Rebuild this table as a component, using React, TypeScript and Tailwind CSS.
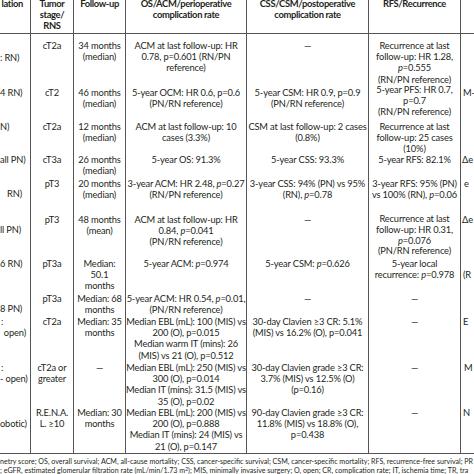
import React from "react";

type Cell = { cls?: string; lines: React.ReactNode[] };
type Row = { h: string; pt: string; cells: Cell[]; last?: boolean };

const P = () => <i>p</i>;

const rows: Row[] = [
  {
    h: "h-[47px]",
    pt: "pt-[3px]",
    cells: [
      { cls: "pt-[15px] text-right pr-[13px]", lines: [": RN)"] },
      { lines: ["cT2a"] },
      { lines: ["34 months", "(median)"] },
      { lines: ["ACM at last follow-up: HR", <>0.78, p=0.601 (RN/PN</>, "reference)"] },
      { lines: ["—"] },
      { lines: ["Recurrence at last", "follow-up: HR 1.28,", <><P />=0.555</>, "(RN/PN reference)"] },
      { lines: [] },
    ],
  },
  {
    h: "h-[37px]",
    pt: "pt-[3px]",
    cells: [
      { cls: "text-right pr-[8px]", lines: ["4 RN)"] },
      { lines: ["cT2"] },
      { lines: ["46 months", "(median)"] },
      { lines: ["5-year OCM: HR 0.6, p=0.6", "(PN/RN reference)"] },
      { lines: ["5-year CSM: HR 0.9, p=0.9", "(PN/RN reference)"] },
      { cls: "pt-0", lines: ["5-year PFS: HR 0.7,", "p=0.7", "(RN/PN reference)"] },
      { cls: "text-left pl-[2px]", lines: ["M-"] },
    ],
  },
  {
    h: "h-[33px]",
    pt: "pt-0",
    cells: [
      { cls: "text-right pr-[24px]", lines: ["N)"] },
      { lines: ["cT2a"] },
      { lines: ["12 months", "(median)"] },
      { lines: ["ACM at last follow-up: 10", "cases (3.3%)"] },
      { lines: ["CSM at last follow-up: 2 cases", "(0.8%)"] },
      { lines: ["Recurrence at last", "follow-up: 25 cases", "(10%)"] },
      { lines: [] },
    ],
  },
  {
    h: "h-[24px]",
    pt: "pt-0",
    cells: [
      { cls: "text-right pr-[8px]", lines: ["all PN)"] },
      { lines: ["cT3a"] },
      { lines: ["26 months", "(median)"] },
      { lines: ["5-year OS: 91.3%"] },
      { lines: ["5-year CSS: 93.3%"] },
      { lines: ["5-year RFS: 82.1%"] },
      { cls: "text-left pl-[1px]", lines: ["Δe"] },
    ],
  },
  {
    h: "h-[36px]",
    pt: "pt-0",
    cells: [
      { cls: "pt-[10px] text-right pr-[8px]", lines: ["RN)"] },
      { lines: ["pT3"] },
      { lines: ["20 months", "(median)"] },
      { lines: [<>3-year ACM: HR 2.48, <P />=0.27</>, "(RN/PN reference)"] },
      { lines: ["3-year CSS: 94% (PN) vs 95%", <>(RN), <P />=0.78</>] },
      { lines: ["3-year RFS: 95% (PN)", <>vs 100% (RN), <P />=0.06</>] },
      { cls: "text-left pl-[3px]", lines: ["e"] },
    ],
  },
  {
    h: "h-[44px]",
    pt: "pt-0",
    cells: [
      { cls: "pt-[10px] text-right pr-[12px]", lines: ["ll PN)"] },
      { lines: ["pT3"] },
      { lines: ["48 months", "(mean)"] },
      { lines: ["ACM at last follow-up: HR", <>0.84, <P />=0.041</>, "(PN/RN reference)"] },
      { lines: ["—"] },
      { cls: "pt-0 leading-[10.8px]", lines: ["Recurrence at last", "follow-up: HR 0.31,", <><P />=0.076</>, "(PN/RN reference)"] },
      { cls: "text-left pl-[1px]", lines: ["Δe"] },
    ],
  },
  {
    h: "h-[35px]",
    pt: "pt-0",
    cells: [
      { cls: "text-right pr-[8px]", lines: ["6 RN)"] },
      { lines: ["pT3a"] },
      { lines: ["Median:", "50.1", "months"] },
      { lines: [<>5-year ACM: <P />=0.974</>] },
      { lines: [<>5-year CSM: <P />=0.626</>] },
      { lines: ["5-year local", <>recurrence: <P />=0.978</>] },
      { cls: "pt-[11px] text-left pl-[2px]", lines: ["(R"] },
    ],
  },
  {
    h: "h-[23px]",
    pt: "pt-0",
    cells: [
      { cls: "pt-[10px] text-right pr-[10px]", lines: ["8 PN)"] },
      { lines: ["pT3a"] },
      { lines: ["Median: 68", "months"] },
      { lines: [<>5-year ACM: HR 0.54, <P />=0.01,</>, "(PN/RN reference)"] },
      { lines: ["—"] },
      { lines: ["—"] },
      { lines: [] },
    ],
  },
  {
    h: "h-[46px]",
    pt: "pt-0",
    cells: [
      { cls: "text-left", lines: [<span className="pl-[1px]">:</span>, <span className="block text-right pr-[4px]">open)</span>] },
      { lines: ["cT2a"] },
      { lines: ["Median: 35", "months"] },
      { lines: ["Median EBL (mL): 100 (MIS) vs", "200 (O), p=0.015", "Median warm IT (mins): 26", "(MIS) vs 21 (O), p=0.512"] },
      { lines: ["30-day Clavien ≥3 CR: 5.1%", "(MIS) vs 16.2% (O), p=0.041"] },
      { lines: ["—"] },
      { cls: "text-left pl-[2px]", lines: ["E"] },
    ],
  },
  {
    h: "h-[45px]",
    pt: "pt-0",
    cells: [
      { cls: "text-left", lines: [<span className="pl-[1px]">:</span>, <span className="block text-right pr-[4px]">- open)</span>] },
      { lines: ["cT2a or", "greater"] },
      { lines: ["—"] },
      { lines: ["Median EBL (mL): 250 (MIS) vs", "300 (O), p=0.014", "Median IT (mins): 31.5 (MIS) vs", "35 (O), p=0.02"] },
      { lines: ["30-day Clavien grade ≥3 CR:", "3.7% (MIS) vs 12.5% (O)", "(p=0.16)"] },
      { lines: ["—"] },
      { cls: "text-left pl-[3px]", lines: ["M"] },
    ],
  },
  {
    h: "h-[47px]",
    pt: "pt-0",
    last: true,
    cells: [
      { cls: "pt-[11px] text-right pr-[6px]", lines: ["obotic)"] },
      { lines: ["R.E.N.A.", "L. ≥10"] },
      { lines: ["Median: 30", "months"] },
      { lines: ["Median EBL (mL): 200 (MIS) vs", "200 (O), p=0.888", "Median IT (mins): 24 (MIS) vs", "21 (O), p=0.147"] },
      { lines: ["90-day Clavien grade ≥3 CR:", "11.8% (MIS) vs 18.8% (O),", "p=0.438"] },
      { lines: ["—"] },
      { cls: "text-left pl-[2px]", lines: ["N"] },
    ],
  },
];

const borders = [
  "border-r border-[#555]",
  "border-r border-[#555]",
  "border-r border-[#555]",
  "border-r border-[#555]",
  "border-r border-[#555]",
  "border-r border-[#555]",
  "",
];

export default function App() {
  return (
    <div
      className="w-[474px] h-[474px] overflow-hidden bg-white text-[#231f20]"
      style={{ fontFamily: "Lato, 'Open Sans', sans-serif" }}
    >
      {/* header */}
      <div className="grid grid-cols-[31px_43px_52px_121px_122px_92px_1fr] h-[34px] border-b border-[#555] text-[9.4px] leading-[11.2px] font-bold tracking-[-0.35px]">
        <div className={borders[0] + " text-right pr-[7px] -mt-[2px] overflow-hidden whitespace-nowrap"}>lation</div>
        <div className={borders[1] + " text-center -mt-[2px]"}>
          <div>Tumor</div>
          <div>stage/</div>
          <div>RNS</div>
        </div>
        <div className={borders[2] + " text-center -mt-[2px]"}>Follow-up</div>
        <div className={borders[3] + " text-center -mt-[2px]"}>
          <div>OS/ACM/perioperative</div>
          <div>complication rate</div>
        </div>
        <div className={borders[4] + " text-center -mt-[2px]"}>
          <div>CSS/CSM/postoperative</div>
          <div>complication rate</div>
        </div>
        <div className={borders[5] + " text-center -mt-[2px]"}>RFS/Recurrence</div>
        <div></div>
      </div>
      {/* body */}
      <div className="text-[9.3px] leading-[11.2px] tracking-[-0.15px]">
        <div className="grid grid-cols-[31px_43px_52px_121px_122px_92px_1fr] h-[3px]">
          {borders.map((b, i) => (
            <div key={i} className={b}></div>
          ))}
        </div>
        {rows.map((r, ri) => (
          <div
            key={ri}
            className={
              "grid grid-cols-[31px_43px_52px_121px_122px_92px_1fr] " +
              r.h +
              (r.last ? " border-b border-[#555]" : "")
            }
          >
            {r.cells.map((c, ci) => (
              <div
                key={ci}
                className={
                  borders[ci] +
                  " overflow-hidden whitespace-nowrap " +
                  (c.cls && c.cls.includes("pt-") ? "" : r.pt + " ") +
                  (c.cls && (c.cls.includes("text-right") || c.cls.includes("text-left")) ? "" : "text-center ") +
                  (c.cls ?? "")
                }
              >
                {c.lines.map((l, li) => (
                  <div key={li}>{l}</div>
                ))}
              </div>
            ))}
          </div>
        ))}
      </div>
      {/* footnote */}
      <div className="pt-[3px] text-[7.1px] leading-[9px] whitespace-nowrap">
        <div>
          netry score; OS, overall survival; ACM, all-cause mortality; CSS, cancer-specific survival; CSM, cancer-specific mortality; RFS, recurrence-free survival; PR
        </div>
        <div>
          ; eGFR, estimated glomerular filtration rate (mL/min/1.73 m<sup className="text-[5px]">2</sup>); MIS, minimally invasive surgery; O, open; CR, complication rate; IT, ischemia time; TR, tra
        </div>
      </div>
    </div>
  );
}
